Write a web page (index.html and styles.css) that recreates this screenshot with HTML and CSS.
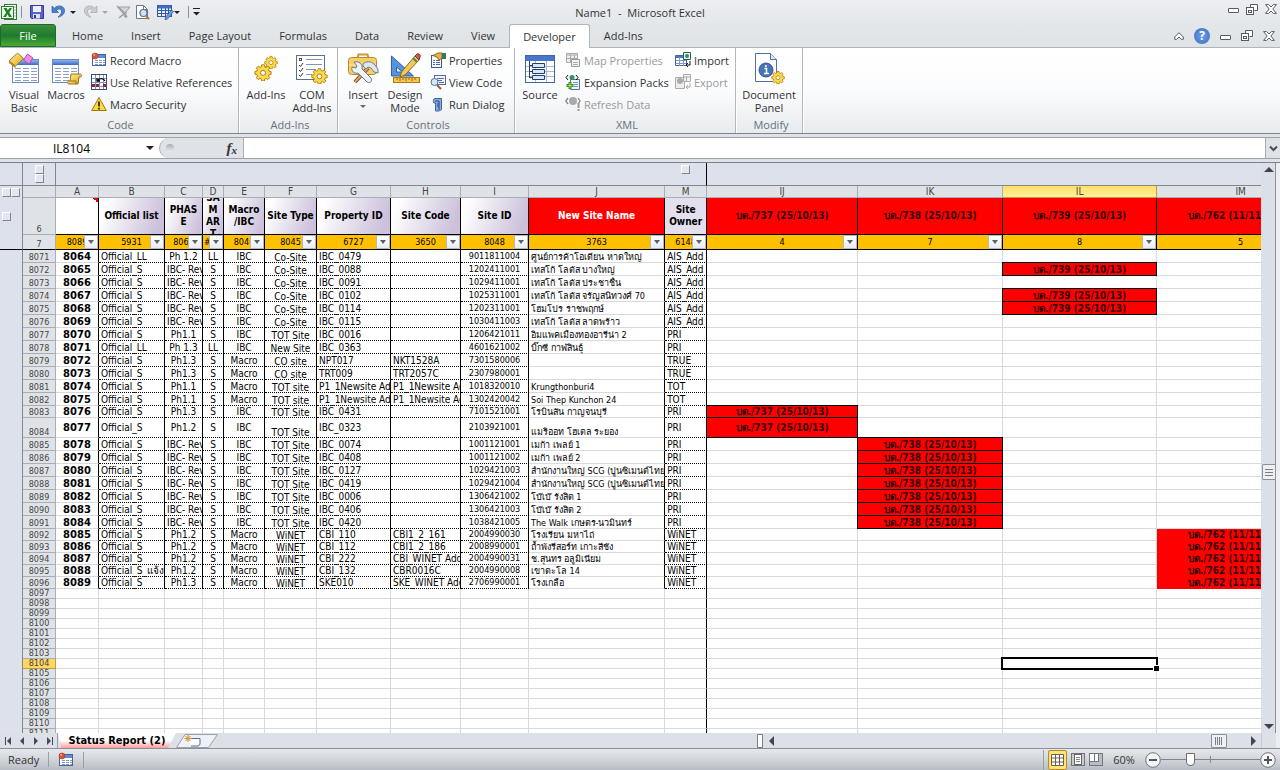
FILE: index.html
```html
<!DOCTYPE html>
<html lang="en">
<head>
    <meta charset="UTF-8">
    <meta name="viewport" content="width=device-width, initial-scale=1.0">
    <title>Name1 - Microsoft Excel</title>
    <link rel="stylesheet" href="styles.css">
</head>
<body>
    <svg class="defs" width="0" height="0" aria-hidden="true">
        <defs>
            <linearGradient id="gold" x1="0" y1="0" x2="1" y2="1">
                <stop offset="0" stop-color="#fff0a0"/><stop offset="1" stop-color="#e3a818"/>
            </linearGradient>
            <linearGradient id="blue" x1="0" y1="0" x2="0" y2="1">
                <stop offset="0" stop-color="#8fb4ee"/><stop offset="1" stop-color="#3a6bc4"/>
            </linearGradient>
            <symbol id="gear" viewBox="-1 -1 20 20">
                <path d="M7.500 1h3l.5 2.300 1.400.6 2-1.300 2 2-1.300 2 .6 1.400 2.300.5v3l-2.300.5-.6 1.400 1.300 2-2 2-2-1.300-1.400.6-.5 2.300h-3l-.5-2.300-1.400-.6-2 1.300-2-2 1.300-2-.6-1.400L0 11.500v-3L2.300 8l.6-1.400-1.300-2 2-2 2 1.300L7 3.300z" fill="#fbd84c" stroke="#a87400"/>
                <circle cx="9" cy="10" r="2.800" fill="#fff" stroke="#a87400"/>
            </symbol>
            <symbol id="sheet" viewBox="0 0 28 25">
                <rect x=".5" y=".5" width="26" height="23" fill="#fff" stroke="#6d8ab8"/>
                <rect x="1" y="1" width="25" height="5" fill="url(#blue)"/>
                <path d="M3 9.500h6m2 0h6m2 0h6M3 12.500h6m2 0h6m2 0h6M3 15.500h6m2 0h6m2 0h6M3 18.500h6m2 0h6m2 0h6M3 21.500h6m2 0h6m2 0h6" stroke="#8a9fc4"/>
            </symbol>
            <symbol id="record" viewBox="0 0 16 16">
                <rect x="1.500" y="2.500" width="13" height="11" fill="#fff" stroke="#45649c"/>
                <rect x="2" y="3" width="12" height="3" fill="#5d8bd8"/>
                <path d="M4 8.500h3m1 0h3m1 0h2M4 10.500h3m1 0h3m1 0h2M4 12.500h3m1 0h3m1 0h2" stroke="#7f98c4"/>
                <circle cx="4" cy="4" r="3" fill="#d6513c" stroke="#a93827" stroke-width=".6"/>
                <circle cx="3.200" cy="3" r="1" fill="#f3a597"/>
            </symbol>
            <symbol id="restore" viewBox="0 0 12 11">
                <path d="M4.500 3.500v-3h7v6h-3" fill="#fff" stroke="#555b66"/>
                <rect x=".5" y="3.500" width="7" height="7" fill="#fff" stroke="#555b66"/>
                <rect x="2.500" y="6.500" width="3" height="2" fill="none" stroke="#555b66"/>
            </symbol>
            <symbol id="close" viewBox="0 0 12 10">
                <path d="M.6.6h3L6 3 8.400.6h3L7.800 5l3.600 4.400h-3L6 7 3.600 9.400h-3L4.200 5z" fill="#fff" stroke="#555b66"/>
            </symbol>
        </defs>
    </svg>

    <header class="titlebar">
        <div class="quick">
            <button class="tool" aria-label="Excel"><svg width="18" height="18" viewBox="0 0 18 18"><rect x="4.500" y="1.500" width="12" height="15" fill="#fff" stroke="#2f7d32"/><path d="M13 4h3M13 7h3M13 10h3M13 13h3" stroke="#7fbd80"/><rect x="1.500" y="3.500" width="12" height="12" fill="#e8f5e5" stroke="#2f7d32"/><path d="M3.500 5h3l1.300 2.500L9.500 5H12L9.200 9.400 12 14H9l-1.500-3L5.800 14H3.200l3-4.600z" fill="#1f7a2b"/></svg></button>
            <span class="sep"></span>
            <button class="tool save" aria-label="Save"><svg width="16" height="16" viewBox="0 0 16 16"><path d="M1.500 1.500h13v13h-12l-1-1z" fill="#5a62c8" stroke="#333b94"/><rect x="4" y="2" width="8" height="6" fill="#eef0fb"/><rect x="4" y="10" width="7" height="4.500" fill="#dfe3f4"/><rect x="5" y="11" width="2" height="3" fill="#333b94"/></svg></button>
            <button class="tool undo" aria-label="Undo"><svg width="15" height="16" viewBox="0 0 15 16"><path d="M1 2v6.500h6.500L5.300 6.400C7 4.500 10 4.600 10.500 7c.4 2-1 4-3.500 6.200 4.500-1 7-4 6.500-7.200C13 1.500 6.500.5 3.300 4.300z" fill="#4b7fd0" stroke="#2f5ca8" stroke-width=".7"/></svg></button>
            <i class="caret"></i>
            <button class="tool redo" aria-label="Redo" disabled><svg width="15" height="16" viewBox="0 0 15 16"><path d="M14 2v6.500H7.500l2.200-2.100C8 4.500 5 4.600 4.500 7c-.4 2 1 4 3.500 6.200-4.500-1-7-4-6.500-7.200C2 1.500 8.500.5 11.700 4.300z" fill="#c9ccd0" stroke="#a2a6ab" stroke-width=".7"/></svg></button>
            <i class="caret pale"></i>
            <button class="tool funnel" aria-label="Clear filter" disabled><svg width="15" height="16" viewBox="0 0 15 16"><path d="M3 3h11L10 8v6l-2-2V8z" fill="#d2d4d7" stroke="#9b9fa4"/><path d="M1 2l10 11M10 8l-7 6" stroke="#9b9fa4" stroke-width="1.500"/></svg></button>
            <button class="tool preview" aria-label="Print preview"><svg width="16" height="16" viewBox="0 0 16 16"><path d="M1.500 1.500h7l4 4v9h-11z" fill="#fff" stroke="#6c7686"/><path d="M8.500 1.500v4h4" fill="none" stroke="#6c7686"/><path d="M11 12l3 3" stroke="#b9772c" stroke-width="2"/><circle cx="8.500" cy="9" r="3.500" fill="#cfe3f5" stroke="#5c6f8a" stroke-width="1.200"/></svg></button>
            <button class="tool" aria-label="Design table"><svg width="18" height="16" viewBox="0 0 18 16"><rect x="1.500" y="1.500" width="14" height="11" fill="#e7eefb" stroke="#35599c"/><path d="M2 3h13" stroke="#3e6fc6" stroke-width="3"/><path d="M2 6.500h13M2 9.500h13M5.500 4v8M9.500 4v8M12.500 4v8" stroke="#35599c"/><path d="M15.500 6l2 1.500-6 7.500-2.500.8.500-2.600z" fill="#6aa0e6" stroke="#2c4f8e" stroke-width=".7"/></svg></button>
            <i class="caret"></i>
            <span class="sep customize-sep"></span>
            <button class="tool" aria-label="Customize"><svg width="9" height="10" viewBox="0 0 9 10"><path d="M1 1.500h7" stroke="#222"/><path d="M1 5h7L4.500 8.500z" fill="#222"/></svg></button>
        </div>
        <h1 class="title">Name1 &nbsp;-&nbsp; Microsoft Excel</h1>
        <div class="window-buttons">
            <button aria-label="Minimize"><i class="dash"></i></button>
            <button aria-label="Restore"><svg width="12" height="11"><use href="#restore"/></svg></button>
            <button aria-label="Close"><svg width="12" height="10"><use href="#close"/></svg></button>
        </div>
    </header>

    <nav class="tabs">
        <button class="file">File</button>
        <button>Home</button>
        <button>Insert</button>
        <button>Page Layout</button>
        <button>Formulas</button>
        <button>Data</button>
        <button>Review</button>
        <button>View</button>
        <button class="active">Developer</button>
        <button>Add-Ins</button>
        <div class="window-buttons book-buttons">
            <button aria-label="Collapse ribbon"><svg width="10" height="8" viewBox="0 0 10 8"><path d="M5 .7L9.300 5v2.300h-2L5 5 2.700 7.300h-2V5z" fill="#fff" stroke="#555b66"/></svg></button>
            <button class="help" aria-label="Help">?</button>
            <button aria-label="Minimize workbook"><i class="dash"></i></button>
            <button aria-label="Restore workbook"><svg width="12" height="11"><use href="#restore"/></svg></button>
            <button aria-label="Close workbook"><svg width="12" height="10"><use href="#close"/></svg></button>
        </div>
    </nav>

    <section class="ribbon">
        <div class="group code">
            <div class="tools">
                <button class="big"><svg width="32" height="32" viewBox="0 0 32 32"><use href="#sheet" x="4" y="6" width="28" height="25"/><path d="M9.500 0l6 5.500-8 7.500L1 8z" fill="url(#gold)" stroke="#a9781a"/><path d="M1 8l6.500 5v2L1 10z" fill="#b98618"/><path d="M19.500 1l5.500 4-4 6-5.500-4z" fill="#ec8bea" stroke="#b04cb0"/></svg>Visual<br>Basic</button>
                <button class="big"><svg width="32" height="32" viewBox="0 0 32 32"><use href="#sheet" x="2" y="6" width="28" height="25"/><path d="M21 21h9c2 0 2 3 0 3h-1l-1 7h-9c-2 0-2-3 0-3h1z" fill="url(#gold)" stroke="#9a7220"/><path d="M20 28h6v3" fill="none" stroke="#9a7220"/></svg>Macros</button>
                <div class="stack">
                    <button class="small"><svg width="16" height="16"><use href="#record"/></svg>Record Macro</button>
                    <button class="small"><svg width="16" height="16" viewBox="0 0 16 16"><rect x=".5" y=".5" width="15" height="15" fill="#fff" stroke="#3c4d6e"/><path d="M1 4.500h14M1 8.500h14M1 12.500h14M4.500 1v14M8.500 1v14M12.500 1v14" stroke="#7f93bb"/><path d="M1 10h3v3H1zM5 10h3v3H5zM12 10h3v3h-3z" fill="#8b2252"/><path d="M14 7c-2-3-5-3-7-1M6 4v3h3" fill="none" stroke="#000" stroke-width="1.300"/></svg>Use Relative References</button>
                    <button class="small"><svg width="16" height="16" viewBox="0 0 16 16"><path d="M8 1.500L15.300 14.500H.7z" fill="#ffd83b" stroke="#9b7a16" stroke-linejoin="round"/><path d="M8 5.500v5M8 11.800v1.600" stroke="#222" stroke-width="1.700"/></svg>Macro Security</button>
                </div>
            </div>
            <div class="label">Code</div>
        </div>
        <div class="group addins">
            <div class="tools">
                <button class="big"><svg width="32" height="32" viewBox="0 0 32 32"><use href="#gear" x="14" y="2" width="14" height="14"/><use href="#gear" x="4" y="10" width="18" height="18"/></svg>Add-Ins</button>
                <button class="big"><svg width="32" height="32" viewBox="0 0 32 32"><rect x=".5" y="2.500" width="28" height="24" fill="#fff" stroke="#5b6f92"/><rect x="3.500" y="5.500" width="2" height="2" fill="none" stroke="#555"/><path d="M3 12l1.500 1.500L7 10M3 17l1.500 1.500L7 15M3 22l1.500 1.500L7 20" fill="none" stroke="#333"/><path d="M10 6.500h16M10 11.500h16M10 16.500h10M10 21.500h6" stroke="#7c93bd"/><use href="#gear" x="15" y="14" width="17" height="17"/></svg>COM<br>Add-Ins</button>
            </div>
            <div class="label">Add-Ins</div>
        </div>
        <div class="group controls">
            <div class="tools">
                <button class="big"><svg width="32" height="32" viewBox="0 0 32 32"><path d="M10.500 5l1-3.500h9l1 3.500" fill="none" stroke="#c89a3a" stroke-width="2"/><rect x="1.500" y="4.500" width="28" height="17" rx="3" fill="#f6cf67" stroke="#b8892a"/><path d="M2 12h27" stroke="#fbe6a6"/><path d="M8 29L21 15" stroke="#7a4a1d" stroke-width="4"/><path d="M8 29L21 15" stroke="#e0a458" stroke-width="2"/><path d="M16 11c3-3 8-3 11 0l4 5v4l-4-1-3-4-3-1-2 2-3-3z" fill="#dfe6ef" stroke="#6c7e98"/><path d="M7 9l3 4-1 2-4-1c-1 4 2 7 6 6l9 9c3 2 6-1 4-4l-9-9c1-5-3-8-8-7z" fill="#eef3f9" stroke="#66799a"/></svg>Insert<i class="caret grey"></i></button>
                <button class="big"><svg width="32" height="32" viewBox="0 0 32 32"><path d="M2.500 3v20h22z" fill="#5b92e0" stroke="#2f5fa8"/><path d="M7.500 14v5h6z" fill="#e8f0fc" stroke="#2f5fa8"/><path d="M26 3l4 4-14 15-5 2 1.500-5z" fill="#f5c955" stroke="#8b6a1a"/><path d="M26 3l2-2c2-1 4 1 3 3l-1 3z" fill="#c75b58" stroke="#7f3330"/><path d="M24 5l4 4" stroke="#4f8a4f" stroke-width="2"/><rect x="4.500" y="24.500" width="26" height="5" fill="#f7c64a" stroke="#a97b14"/><path d="M8 25v2M11 25v3M14 25v2M17 25v3M20 25v2M23 25v3M26 25v2" stroke="#8b6a1a"/></svg>Design<br>Mode</button>
                <div class="stack">
                    <button class="small"><svg width="16" height="16" viewBox="0 0 16 16"><rect x="1.500" y="3.500" width="10" height="12" fill="#f5f8fd" stroke="#405a8a"/><path d="M3 8.500h2m1 0h4M3 10.500h2m1 0h4M3 12.500h2m1 0h4" stroke="#4a6db0"/><path d="M3 3.500L8 1h4v5L9 8 7 5z" fill="#e8b04b" stroke="#93651a"/><path d="M12 1h4v6h-4z" fill="#35785f"/></svg>Properties</button>
                    <button class="small"><svg width="16" height="16" viewBox="0 0 16 16"><rect x="4.500" y="1.500" width="11" height="9" fill="#f2f6fc" stroke="#536c9c"/><path d="M7 4.500h7M7 6.500h5M9 8.500h5" stroke="#536c9c"/><circle cx="4.500" cy="8" r="3.500" fill="#d4e6f8" stroke="#56709c"/><path d="M7 11l4 4" stroke="#9b5a37" stroke-width="2"/></svg>View Code</button>
                    <button class="small"><svg width="16" height="16" viewBox="0 0 16 16"><path d="M5 2.500h6.500v11c0 1-3.500 2-6 1.500V7H4c-1-2-1-4 1-4.500z" fill="#8aabdc" stroke="#40639e"/><path d="M5 5h4v9M7 8h2M7 10h2" fill="none" stroke="#234a86"/></svg>Run Dialog</button>
                </div>
            </div>
            <div class="label">Controls</div>
        </div>
        <div class="group xml">
            <div class="tools">
                <button class="big"><svg width="32" height="32" viewBox="0 0 32 32"><rect x="1.500" y="2.500" width="29" height="27" fill="#fff" stroke="#45649c"/><path d="M2 3h28v5H2z" fill="#4677cc"/><path d="M2 13.500h28M2 18.500h28M2 23.500h28M22.500 8v21M11.500 8v21" stroke="#a5b8dd"/><path d="M5.500 8v17M5 12.500h4M5 18.500h4M5 24.500h4" stroke="#223d70" fill="none"/><path d="M8.500 10.500h12v4h-12zM8.500 16.500h12v4h-12zM8.500 22.500h12v4h-12z" fill="#dce7f9" stroke="#223d70"/></svg>Source</button>
                <div class="stack schema">
                    <button class="small" disabled><svg width="16" height="16" viewBox="0 0 16 16"><path d="M1.500 1.500h11v9h-11z" fill="#eee" stroke="#aaa"/><path d="M1 3h12M1 6.500h11M5.500 3v8M9.500 3v8" stroke="#aaa"/><path d="M6.500 7.500h8v7h-8z" fill="#f4f4f4" stroke="#999"/><path d="M8 10.500h5M8 12.500h5" stroke="#aaa"/></svg>Map Properties</button>
                    <button class="small"><svg width="16" height="16" viewBox="0 0 16 16"><path d="M5.500 5.500h9v10h-9z" fill="#eef4fb" stroke="#56709c"/><path d="M8 8.500h5M9 10.500h4M9 12.500h4" stroke="#7c93bd"/><path d="M3 1L1 3.500 3 6M11 1l2 2.500L11 6" fill="none" stroke="#111"/><circle cx="7" cy="3.500" r="2.500" fill="#39906b"/><path d="M5 8v7M1.500 11.500h7" stroke="#3b8f1e" stroke-width="3"/><path d="M5 9v5M2.500 11.500h5" stroke="#a3e070"/></svg>Expansion Packs</button>
                    <button class="small" disabled><svg width="16" height="16" viewBox="0 0 16 16"><path d="M3 2L.8 5 3 8M13 2l2 3-2 3" fill="none" stroke="#888" stroke-width="1.300"/><circle cx="8" cy="5" r="4" fill="#aaa"/><path d="M13.500 7v5M13.500 13v2" stroke="#999" stroke-width="2"/></svg>Refresh Data</button>
                </div>
                <div class="stack">
                    <button class="small"><svg width="16" height="16" viewBox="0 0 16 16"><path d="M.5 3.500h11v10H.5z" fill="#fff" stroke="#45649c"/><path d="M1 5h10" stroke="#4677cc" stroke-width="2"/><path d="M1 8.500h10M1 11.500h10M4.500 5v9M8.500 5v9" stroke="#7f98c4"/><path d="M8.500.5h7v7h-7z" fill="#e7f3ee" stroke="#2d5d50"/><circle cx="12" cy="4" r="2" fill="#2f8a66"/><path d="M15 9v4h-4m2-2l-2 2 2 2" fill="none" stroke="#111"/></svg>Import</button>
                    <button class="small" disabled><svg width="16" height="16" viewBox="0 0 16 16"><path d="M.5 3.500h9v11h-9z" fill="#eee" stroke="#aaa"/><circle cx="5" cy="7" r="3" fill="#aaa"/><path d="M8.500.5h7v7h-7z" fill="#f4f4f4" stroke="#aaa"/><path d="M8 3h8M11.500 3v5M15 9v4h-4m2-2l-2 2 2 2" fill="none" stroke="#aaa"/></svg>Export</button>
                </div>
            </div>
            <div class="label">XML</div>
        </div>
        <div class="group modify">
            <div class="tools">
                <button class="big"><svg width="32" height="32" viewBox="0 0 32 32"><path d="M2.500.5h15l6 6v22h-21z" fill="#fff" stroke="#56709c"/><path d="M17.500.5v6h6" fill="#dce6f4" stroke="#56709c"/><circle cx="13" cy="17" r="7" fill="#4a74ba" stroke="#2f568f"/><path d="M11.500 15.500h2v5M11 20.500h5M13 12v2" fill="none" stroke="#fff" stroke-width="1.500"/><use href="#gear" x="18" y="17" width="14" height="14"/></svg>Document<br>Panel</button>
            </div>
            <div class="label">Modify</div>
        </div>
    </section>

    <section class="formula-bar">
        <input class="name-box" type="text" value="IL8104" aria-label="Name Box">
        <button class="name-arrow" aria-label="Names"><i class="caret"></i></button>
        <div class="fx-area"><i class="knob"></i><button class="fx" aria-label="Insert Function">f<sub>x</sub></button></div>
        <input class="formula" type="text" aria-label="Formula">
        <button class="expand" aria-label="Expand Formula Bar"><svg width="9" height="7" viewBox="0 0 9 7"><path d="M1 1.500l3.500 3.500L8 1.500" fill="none" stroke="#4a4f59" stroke-width="2"/></svg></button>
    </section>

    <main class="workbook">
        <div class="pane">
            <table class="grid">
                <colgroup id="columns"></colgroup>
                <thead id="head"></thead>
                <tbody id="rows"></tbody>
            </table>
        </div>
        <div class="vscroll">
            <button aria-label="Scroll up"><i class="arrow up"></i></button>
            <span class="before"></span>
            <i class="thumb"></i>
            <span class="after"></span>
            <button aria-label="Scroll down"><i class="arrow down"></i></button>
        </div>
    </main>

    <section class="sheet-bar">
        <div class="sheets">
            <div class="sheet-nav">
                <button aria-label="First sheet"><svg width="8" height="8" viewBox="0 0 8 8"><path d="M1.500 0v8" stroke="#444b57"/><path d="M7 0v8L3 4z" fill="#444b57"/></svg></button>
                <button aria-label="Previous sheet"><svg width="8" height="8" viewBox="0 0 8 8"><path d="M6 0v8L2 4z" fill="#444b57"/></svg></button>
                <button aria-label="Next sheet"><svg width="8" height="8" viewBox="0 0 8 8"><path d="M2 0v8l4-4z" fill="#444b57"/></svg></button>
                <button aria-label="Last sheet"><svg width="8" height="8" viewBox="0 0 8 8"><path d="M1 0v8l4-4z" fill="#444b57"/><path d="M6.500 0v8" stroke="#444b57"/></svg></button>
            </div>
            <button class="sheet-tab">Status Report (2)</button>
            <button class="new-tab" aria-label="Insert sheet"><svg width="42" height="14" viewBox="0 0 42 14"><path d="M.5 13.500L9 .5h32.500l-9 13z" fill="#eef1f5" stroke="#9aa0aa"/><path d="M14 4.500h10v6l-2 1.500h-7" fill="#fff" stroke="#4f6fa8"/><path d="M12 1v7M8.500 4.500h7M9.500 2l5 5M14.500 2l-5 5" stroke="#d3902c"/></svg></button>
        </div>
        <div class="hscroll">
            <i class="splitter"></i>
            <button aria-label="Scroll left"><i class="arrow left"></i></button>
            <span class="before"></span>
            <i class="thumb"></i>
            <span class="after"></span>
            <button aria-label="Scroll right"><i class="arrow right"></i></button>
        </div>
        <i class="corner"></i>
    </section>

    <footer class="status">
        <span class="ready">Ready</span>
        <button class="macro-rec" aria-label="Record macro"><svg width="16" height="16"><use href="#record"/></svg></button>
        <div class="views">
            <button class="on" aria-label="Normal"><svg width="13" height="12" viewBox="0 0 13 12"><path d="M.5.5h12v11H.5zM.5 4h12M.5 8h12M4.500.5v11M8.500.5v11" fill="#fff" stroke="#6a6250"/></svg></button>
            <button aria-label="Page Layout"><svg width="14" height="13" viewBox="0 0 14 13"><rect width="14" height="13" fill="#6f747d"/><rect x="1" y="1" width="12" height="11" fill="#c9ccd1"/><rect x="3.500" y="1.500" width="7" height="10" fill="#fff" stroke="#666"/><path d="M5 4.500h4M5 6.500h4M5 8.500h4" stroke="#888"/></svg></button>
            <button aria-label="Page Break Preview"><svg width="14" height="13" viewBox="0 0 14 13"><rect width="14" height="13" fill="#6f747d"/><path d="M1 1h4v7H1zM6 1h3v7H6z" fill="#fff"/><path d="M10 1h3v11H1V9h9z" fill="#b9bdc4"/></svg></button>
        </div>
        <span class="percent">60%</span>
        <button class="round" aria-label="Zoom out"><svg width="16" height="16" viewBox="0 0 16 16"><circle cx="8" cy="8" r="7.300" fill="#f6f7f8" stroke="#70757e"/><path d="M4 8h8" stroke="#555" stroke-width="2"/></svg></button>
        <input class="zoom" type="range" min="10" max="200" value="62" aria-label="Zoom">
        <button class="round" aria-label="Zoom in"><svg width="16" height="16" viewBox="0 0 16 16"><circle cx="8" cy="8" r="7.300" fill="#f6f7f8" stroke="#70757e"/><path d="M4 8h8M8 4v8" stroke="#555" stroke-width="2"/></svg></button>
    </footer>

    <script src="script.js"></script>
</body>
</html>
```
FILE: styles.css
```css
* {
    box-sizing: border-box;
}
body {
    margin: 0;
    height: 100vh;
    display: flex;
    flex-direction: column;
    overflow: hidden;
    background-color: #dfe2e7;
    font-family: "Open Sans", "Noto Sans", sans-serif;
    font-size: 11px;
    color: #333;
}
button {
    padding: 0;
    border: none;
    background: none;
    font: inherit;
    color: inherit;
}
svg {
    display: block;
    flex: none;
}
.defs {
    position: absolute;
}

/* Title bar */
.titlebar {
    display: grid;
    grid-template-columns: 1fr auto 1fr;
    align-items: center;
    height: 24px;
    background: linear-gradient(#eceef1, #e4e7ea);
}
.quick {
    display: flex;
    align-items: center;
}
.sep {
    width: 1px;
    height: 12px;
    margin: 0 7px 0 3px;
    background-color: #8b9098;
}
.save {
    margin-right: 6px;
}
.undo, .redo {
    margin-right: 4px;
}
.quick .redo {
    margin-left: 7px;
}
.funnel {
    margin: 0 4px 0 8px;
}
.preview {
    margin-right: 5px;
}
.customize-sep {
    margin: 0 3px 0 8px;
}
.caret {
    border: 3px solid transparent;
    border-top-color: #222;
    border-bottom: none;
}
.caret.pale {
    border-top-color: #a5a8ad;
}
.caret.grey {
    border-top-color: #666;
}
.title {
    margin: 0;
    font-size: 11px;
    font-weight: normal;
}
.window-buttons {
    display: flex;
    justify-content: flex-end;
    align-items: center;
    gap: 7px;
    padding: 0 3px 6px 0;
}
.dash {
    display: block;
    width: 11px;
    height: 5px;
    margin-top: 3px;
    border: 1px solid #555b66;
    border-radius: 1px;
    background-color: #fff;
}

/* Ribbon tabs */
.tabs {
    display: flex;
    height: 24px;
    border-bottom: 1px solid #b0b5bb;
    background: linear-gradient(#e4e7ea, #dfe3e6);
}
.tabs > button {
    padding: 0 14px;
    line-height: 23px;
}
.tabs .file {
    width: 56px;
    margin-right: 2px;
    border: 1px solid #1f6a2a;
    border-radius: 3px 3px 0 0;
    background: linear-gradient(#3b8f3c, #1f7b2c 50%, #49ab35);
    color: #fff;
    line-height: 21px;
}
.tabs .active {
    height: 24px;
    border: 1px solid #b0b5bb;
    border-bottom: none;
    border-radius: 3px 3px 0 0;
    padding: 0 13px;
    background-color: #fff;
}
.book-buttons {
    flex: 1;
    gap: 10px;
    padding: 0 5px 0 0;
}
.help {
    width: 16px;
    height: 16px;
    border-radius: 50%;
    background: radial-gradient(#6ba0ea, #3a6dc0);
    color: #fff;
    font-size: 12px;
    font-weight: bold;
    line-height: 16px;
}

/* Ribbon */
.ribbon {
    display: flex;
    height: 86px;
    border-bottom: 1px solid #80868f;
    background: linear-gradient(#fff, #fbfcfd 50%, #e8ebee);
}
.group {
    display: flex;
    flex-direction: column;
    justify-content: space-between;
    padding: 1px 0 1px 3px;
    border-right: 1px solid #b4b8be;
    box-shadow: 1px 0 #fff;
    margin-right: 1px;
}
.code {
    width: 239px;
}
.addins {
    width: 98px;
}
.controls {
    width: 176px;
}
.xml {
    width: 220px;
}
.modify {
    width: 66px;
}
.tools {
    display: flex;
}
.big {
    display: flex;
    flex-direction: column;
    align-items: center;
    flex: none;
    width: 42px;
    padding-top: 4px;
    line-height: 13px;
}
.big svg {
    margin-bottom: 3px;
}
.big .caret {
    margin-top: 4px;
}
.addins .big {
    width: 46px;
}
.modify .big {
    width: 58px;
}
.stack {
    margin-left: 4px;
}
.schema {
    width: 106px;
}
.small {
    display: flex;
    align-items: center;
    gap: 3px;
    height: 22px;
    white-space: nowrap;
}
.small:disabled {
    color: #9a9a9a;
}
.label {
    line-height: 14px;
    text-align: center;
    color: #6a7079;
}

/* Formula bar */
.formula-bar {
    display: flex;
    height: 22px;
    margin: 3px 0;
    border-top: 1px solid #9a9fa8;
    border-bottom: 1px solid #9a9fa8;
    background-color: #fff;
}
.formula-bar input {
    border: none;
    padding: 0;
    outline: none;
    background-color: #fff;
    font: inherit;
    font-size: 12px;
    color: #000;
}
.name-box {
    width: 143px;
    text-align: center;
}
.name-arrow {
    width: 16px;
}
.name-arrow .caret {
    display: block;
    width: 8px;
    margin: 0 auto 0 3px;
    border-width: 4px;
    border-bottom: none;
}
.fx-area {
    display: flex;
    align-items: center;
    justify-content: space-between;
    width: 85px;
    padding: 0 6px;
    border: 1px solid #a9adb5;
    border-width: 0 1px;
    border-radius: 10px 0 0 10px;
    background-color: #dfe3e8;
}
.knob {
    width: 8px;
    height: 8px;
    border-radius: 50%;
    background: linear-gradient(#a9adb3, #eceef0);
}
.fx {
    font: italic bold 15px "Liberation Serif", serif;
}
.fx sub {
    font-size: 11px;
    vertical-align: -1px;
}
.formula {
    flex: 1;
    min-width: 0;
}
.expand {
    display: flex;
    align-items: center;
    justify-content: center;
    width: 15px;
    border-left: 1px solid #a9adb5;
    background-color: #dfe3e8;
}

/* Sheet */
.workbook {
    display: flex;
    flex: 1;
    min-height: 0;
    border-top: 1px solid #7c828c;
}
.pane {
    flex: 1;
    min-width: 0;
    overflow: hidden;
    background-color: #fff;
}
.grid {
    table-layout: fixed;
    width: 0;
    border-collapse: separate;
    border-spacing: 0;
    font-family: "DejaVu Sans Condensed", "DejaVu Sans", sans-serif;
    font-size: 9px;
    line-height: 9px;
    color: #000;
}
.grid td, .grid th {
    height: 10px;
    padding: 0 1px;
    overflow: hidden;
    border: 0 solid #d8dadd;
    border-width: 0 1px 1px 0;
    font-weight: normal;
    text-align: center;
    white-space: nowrap;
}
.grid .gutter {
    border-right-color: #80858e;
    border-bottom: none;
    background-color: #dde1ec;
}
.grid .row-head {
    border-color: #a9adb4;
    background-color: #dfe3e8;
    color: #444;
    vertical-align: bottom;
}
.grid .current {
    border-color: #c39a3c;
    background-color: #ffd75e;
}
.grid .outline th {
    height: 23px;
    padding-top: 2px;
    border-right: none;
    border-bottom-color: #80858e;
    background-color: #dde1ec;
    vertical-align: top;
}
.grid .outline .ruled {
    border-right: 1px solid #80858e;
}
.grid .outline .frozen {
    border-right: 1px solid #000;
}
.level {
    display: block;
    width: 9px;
    height: 9px;
    margin: 0 auto;
    border: 1px solid #fff;
    border-right-color: #80858e;
    border-bottom-color: #80858e;
    background-color: #e4e7ee;
}
.side-by-side {
    display: flex;
    justify-content: center;
}
.side-by-side .level {
    margin: 0;
}
.grid .letters th {
    height: 12px;
    border-color: #a9adb4;
    background-color: #dfe3e8;
    font-size: 10px;
    color: #444;
}
.grid .letters .gutter {
    border-right-color: #80858e;
    background-color: #dde1ec;
}
.grid .letters .current {
    border-color: #c39a3c;
    background: linear-gradient(#ffe067, #fff09a);
}
.names .level {
    margin-left: 1px;
}
.grid .names .caption {
    height: 37px;
    border-color: #000;
    background: linear-gradient(110deg, #fff 10%, #ccc0da 90%);
    font-size: 10px;
    font-weight: bold;
    line-height: 12px;
}
.caption div {
    display: flex;
    align-items: center;
    justify-content: center;
    height: 36px;
}
.grid .names .note {
    position: relative;
    background: #fff;
}
.note::after {
    content: "";
    position: absolute;
    top: 0;
    right: 0;
    width: 5px;
    height: 5px;
    background: linear-gradient(to top right, transparent 50%, #e00000 50%);
}
.grid .names .site-name {
    background: #f00;
    color: #fff;
}
.grid .names .owner {
    background: #e4dfec;
}
.grid .names .order {
    background: #f00;
    color: #300;
}
.grid .filters th, .grid .filters td {
    position: relative;
    height: 15px;
    border-bottom-color: #000;
}
.grid .filters td {
    border-color: #000;
    background-color: #ffc000;
}
.grid .filters .gutter {
    border-bottom: 1px solid #000;
}
.filter {
    position: absolute;
    right: 0;
    bottom: 0;
    display: flex;
    align-items: center;
    justify-content: center;
    width: 14px;
    height: 14px;
    border: 1px solid #b4b8bf;
    background: linear-gradient(#fff, #e9ecf0);
}
.filter .caret {
    border-width: 4px 3px 0;
    border-top-color: #5a606b;
}
.grid .tall td, .grid .tall th {
    height: 13px;
}
.grid .medium td, .grid .medium th {
    height: 12px;
}
.grid .high td, .grid .high th {
    height: 20px;
}
.grid .id {
    font-family: "DejaVu Sans", sans-serif;
    font-size: 10px;
    font-weight: bold;
    border-right-color: #000;
}
/* underscores hang over the dotted line */
.grid .field {
    overflow-x: clip;
    overflow-y: visible;
    border-right-color: #000;
    border-bottom: 1px dotted #000;
    font-size: 10px;
}
.grid .text {
    padding-left: 2px;
    padding-right: 0;
    text-align: left;
}
.grid .low {
    vertical-align: bottom;
}
.grid .number {
    font-size: 9px;
}
.grid .thai {
    border-bottom: 1px solid #d8dadd;
    font-size: 9px;
}
.grid .frozen {
    border-right-color: #000;
}
.grid .order-cell {
    background-color: #f00;
    border-color: #000;
    box-shadow: 0 -1px #000, -1px 0 #000, -1px -1px #000;
    color: #300;
    font-size: 10px;
    font-weight: bold;
}
.grid .borderless {
    border-color: #f00;
    box-shadow: none;
}
.grid .selected {
    position: relative;
    overflow: visible;
}
.cursor {
    position: absolute;
    inset: -2px;
    border: 2px solid #000;
}
.cursor::after {
    content: "";
    position: absolute;
    right: -3px;
    bottom: -3px;
    width: 5px;
    height: 5px;
    border: 1px solid #fff;
    border-width: 1px 0 0 1px;
    background-color: #000;
}

/* Scroll bars */
.vscroll {
    display: flex;
    flex-direction: column;
    align-items: center;
    width: 19px;
    padding: 4px 0;
    border-right: 4px solid #eceef1;
    background-color: #dbdfe7;
    box-shadow: inset -1px 0 #8a8f98;
}
.vscroll .before {
    flex: 6;
}
.vscroll .after {
    flex: 5;
}
.thumb {
    width: 14px;
    height: 16px;
    border: 1px solid #8a8f98;
    border-radius: 1px;
    background: repeating-linear-gradient(#777d88 0 1px, transparent 1px 3px) center / 8px 7px no-repeat, #eef0f3;
}
.arrow {
    display: block;
    border: 5px solid transparent;
}
.up {
    border-top: none;
    border-bottom-color: #3f4550;
}
.down {
    border-bottom: none;
    border-top-color: #3f4550;
}
.left {
    border-left: none;
    border-right-color: #3f4550;
}
.right {
    border-right: none;
    border-left-color: #3f4550;
}
.sheet-bar {
    display: flex;
    height: 16px;
    border-bottom: 1px solid #8a8f98;
    background-color: #dde1e7;
}
.sheets {
    display: flex;
    flex: 3;
}
.sheet-nav {
    display: flex;
    align-items: center;
    gap: 6px;
    width: 58px;
    padding-left: 4px;
    border-right: 1px solid #9aa0aa;
}
.sheet-tab {
    width: 118px;
    background: linear-gradient(#fff 50%, #ff9c9c);
    clip-path: polygon(0 0, 100% 0, 110px 100%, 3px 100%);
    font: bold 11px "DejaVu Sans Condensed", "DejaVu Sans", sans-serif;
    line-height: 15px;
    color: #000;
}
.hscroll {
    display: flex;
    align-items: center;
    flex: 2;
}
.splitter {
    width: 6px;
    height: 14px;
    margin-right: 6px;
    border: 1px solid #7c828c;
    background-color: #fff;
}
.hscroll .before {
    flex: 18;
}
.hscroll .after {
    flex: 1;
}
.hscroll .thumb {
    height: 14px;
    width: 16px;
    background: repeating-linear-gradient(to right, #777d88 0 1px, transparent 1px 2px) center / 7px 8px no-repeat, #eef0f3;
}
.hscroll button:last-child {
    margin-right: 5px;
}
.corner {
    width: 19px;
    border-left: 1px solid #c6cad1;
    border-right: 4px solid #eceef1;
}

/* Status bar */
.status {
    display: flex;
    align-items: center;
    height: 21px;
    padding-right: 4px;
    background: linear-gradient(#e6e9ec, #cdd1d6 60%, #b8bdc4);
}
.ready {
    width: 49px;
    padding-left: 8px;
    border-right: 1px solid #9ba0a8;
}
.macro-rec {
    width: 35px;
    padding-left: 9px;
    border-right: 1px solid #9ba0a8;
}
.views {
    display: flex;
    align-items: center;
    gap: 4px;
    margin-left: auto;
    padding-left: 4px;
    border-left: 1px solid #9ba0a8;
}
.views .on {
    padding: 3px 2px;
    border: 1px solid #b88a2c;
    border-radius: 2px;
    background-color: #ffe375;
}
.percent {
    width: 42px;
    text-align: center;
}
.zoom {
    width: 99px;
    height: 16px;
    margin: 0;
    appearance: none;
    background: linear-gradient(#7f858e, #7f858e) center / 100% 1px no-repeat, linear-gradient(#7f858e, #7f858e) center / 1px 7px no-repeat;
}
.zoom::-webkit-slider-thumb {
    appearance: none;
    width: 9px;
    height: 13px;
    border: 1px solid #6a6f78;
    border-radius: 1px 1px 5px 5px;
    background-color: #fff;
}
```
FILE: script.js
```js
const columns = [
    ['A', 43], ['B', 66], ['C', 38], ['D', 21], ['E', 41], ['F', 52], ['G', 74], ['H', 70],
    ['I', 68], ['J', 136], ['M', 42], ['IJ', 151], ['IK', 145], ['IL', 154], ['IM', 168]
];
const names = ['', 'Official list', 'PHAS<br>E', 'SA<br>M<br>AR<br>T', 'Macro<br>/IBC', 'Site Type', 'Property ID',
    'Site Code', 'Site ID', 'New Site Name', 'Site<br>Owner', 'บด./737 (25/10/13)', 'บด./738 (25/10/13)',
    'บด./739 (25/10/13)', 'บด./762 (11/11/2013)'];
const filters = ['8089', '5931', '8069', '####', '8046', '8045', '6727', '3650', '8048', '3763', '6148', '4', '7', '8', '5'];

// id, list, phase, mart, type, site type, property, code, site id, name, owner
const sites = [
    ['8064', 'Official_LL', 'Ph 1.2', 'LL', 'IBC', 'Co-Site', 'IBC_0479', '', '9011811004', 'ศูนย์การค้าโอเดียน หาดใหญ่', 'AIS_Add'],
    ['8065', 'Official_S', 'IBC- Rev', 'S', 'IBC', 'Co-Site', 'IBC_0088', '', '1202411001', 'เทสโก้ โลตัส บางใหญ่', 'AIS_Add'],
    ['8066', 'Official_S', 'IBC- Rev', 'S', 'IBC', 'Co-Site', 'IBC_0091', '', '1029411001', 'เทสโก้ โลตัส ประชาชื่น', 'AIS_Add'],
    ['8067', 'Official_S', 'IBC- Rev', 'S', 'IBC', 'Co-Site', 'IBC_0102', '', '1025311001', 'เทสโก้ โลตัส จรัญสนิทวงศ์ 70', 'AIS_Add'],
    ['8068', 'Official_S', 'IBC- Rev', 'S', 'IBC', 'Co-Site', 'IBC_0114', '', '1202311001', 'โฮมโปร ราชพฤกษ์', 'AIS_Add'],
    ['8069', 'Official_S', 'IBC- Rev', 'S', 'IBC', 'Co-Site', 'IBC_0115', '', '1030411003', 'เทสโก้ โลตัส ลาดพร้าว', 'AIS_Add'],
    ['8070', 'Official_S', 'Ph1.1', 'S', 'IBC', 'TOT Site', 'IBC_0016', '', '1206421011', 'อิมแพคเมืองทองอารีน่า 2', 'PRI'],
    ['8071', 'Official_LL', 'Ph 1.3', 'LL', 'IBC', 'New Site', 'IBC_0363', '', '4601621002', 'บิ๊กซี กาฬสินธุ์', 'PRI'],
    ['8072', 'Official_S', 'Ph1.3', 'S', 'Macro', 'CO site', 'NPT017', 'NKT1528A', '7301580006', '', 'TRUE'],
    ['8073', 'Official_S', 'Ph1.3', 'S', 'Macro', 'CO site', 'TRT009', 'TRT2057C', '2307980001', '', 'TRUE'],
    ['8074', 'Official_S', 'Ph1.1', 'S', 'Macro', 'TOT site', 'P1_1Newsite Add', 'P1_1Newsite Add', '1018320010', 'Krungthonburi4', 'TOT'],
    ['8075', 'Official_S', 'Ph1.1', 'S', 'Macro', 'TOT site', 'P1_1Newsite Add', 'P1_1Newsite Add', '1302420042', 'Soi Thep Kunchon 24', 'TOT'],
    ['8076', 'Official_S', 'Ph1.3', 'S', 'IBC', 'TOT Site', 'IBC_0431', '', '7101521001', 'โรบินสัน กาญจนบุรี', 'PRI'],
    ['8077', 'Official_S', 'Ph1.2', 'S', 'IBC', 'TOT Site', 'IBC_0323', '', '2103921001', 'แมริออท โฮเตล ระยอง', 'PRI'],
    ['8078', 'Official_S', 'IBC- Rev', 'S', 'IBC', 'TOT Site', 'IBC_0074', '', '1001121001', 'เมก้า เพลย์ 1', 'PRI'],
    ['8079', 'Official_S', 'IBC- Rev', 'S', 'IBC', 'TOT Site', 'IBC_0408', '', '1001121002', 'เมก้า เพลย์ 2', 'PRI'],
    ['8080', 'Official_S', 'IBC- Rev', 'S', 'IBC', 'TOT Site', 'IBC_0127', '', '1029421003', 'สำนักงานใหญ่ SCG (ปูนซิเมนต์ไทย)', 'PRI'],
    ['8081', 'Official_S', 'IBC- Rev', 'S', 'IBC', 'TOT Site', 'IBC_0419', '', '1029421004', 'สำนักงานใหญ่ SCG (ปูนซิเมนต์ไทย)', 'PRI'],
    ['8082', 'Official_S', 'IBC- Rev', 'S', 'IBC', 'TOT Site', 'IBC_0006', '', '1306421002', 'โบ๊เบ๊ รังสิต 1', 'PRI'],
    ['8083', 'Official_S', 'IBC- Rev', 'S', 'IBC', 'TOT Site', 'IBC_0406', '', '1306421003', 'โบ๊เบ๊ รังสิต 2', 'PRI'],
    ['8084', 'Official_S', 'IBC- Rev', 'S', 'IBC', 'TOT Site', 'IBC_0420', '', '1038421005', 'The Walk เกษตร-นวมินทร์', 'PRI'],
    ['8085', 'Official_S', 'Ph1.2', 'S', 'Macro', 'WiNET', 'CBI_110', 'CBI1_2_161', '2004990030', 'โรงเรียน มหาไถ่', 'WiNET'],
    ['8086', 'Official_S', 'Ph1.2', 'S', 'Macro', 'WiNET', 'CBI_112', 'CBI1_2_186', '2008990001', 'ถ้ำพังรีสอร์ท เกาะสีชัง', 'WiNET'],
    ['8087', 'Official_S', 'Ph1.2', 'S', 'Macro', 'WiNET', 'CBI_222', 'CBI_WINET Add', '2004990031', 'ช.สุนทร อลูมิเนียม', 'WiNET'],
    ['8088', 'Official_S_แจ้ง', 'Ph1.2', 'S', 'Macro', 'WiNET', 'CBI_132', 'CBR0016C', '2004990008', 'เขาตะโล 14', 'WiNET'],
    ['8089', 'Official_S', 'Ph1.3', 'S', 'Macro', 'WiNET', 'SKE010', 'SKE_WINET Add', '2706990001', 'โรงเกลือ', 'WiNET']
];

const firstRow = 8071;
const lastRow = 8111;
const currentRow = 8104;
const textColumns = ['B', 'G', 'H', 'J', 'M'];

// sheet rows that carry an order, per order column
const orders = {
    IJ: [8083, 8084],
    IK: [8085, 8086, 8087, 8088, 8089, 8090, 8091],
    IL: [8072, 8074, 8075],
    IM: [8092, 8093, 8094, 8095, 8096]
};

function rowSize(row) {
    if (row === 8084) return 'high';
    if (row === 8083 || (row >= 8092 && row <= 8096)) return 'medium';
    return row < 8092 ? 'tall' : '';
}

function captionClass(letter) {
    if (letter === 'A') return 'note';
    if (letter === 'J') return 'site-name';
    if (letter === 'M') return 'owner';
    return letter.length > 1 ? 'order' : '';
}

function siteClass(letter, value) {
    if (letter === 'A') return 'id';
    let name = 'field';
    if (textColumns.includes(letter) || value.startsWith('IBC-')) name += ' text';
    if (letter === 'F' || letter === 'J') name += ' low';
    if (letter === 'I') name += ' number';
    if (letter === 'J') name += ' thai';
    return name;
}

function cell(row, letter, index) {
    const site = sites[row - firstRow];
    if (orders[letter] && orders[letter].includes(row)) {
        return `<td class="order-cell ${letter === 'IM' ? 'borderless' : ''}">${names[index]}</td>`;
    }
    if (letter === 'IL' && row === currentRow) {
        return '<td class="selected"><div class="cursor"></div></td>';
    }
    if (site && index < site.length) {
        return `<td class="${siteClass(letter, site[index])}">${site[index]}</td>`;
    }
    return `<td class="${letter === 'M' ? 'frozen' : ''}"></td>`;
}

document.getElementById('columns').innerHTML =
    [23, 33, ...columns.map(c => c[1])].map(width => `<col style="width: ${width}px">`).join('');

const level = '<button class="level" aria-label="Outline"></button>';
document.getElementById('head').innerHTML = `
    <tr class="outline">
        <th class="ruled"></th><th class="ruled">${level}${level}</th>
        <th colspan="10"></th><th class="frozen">${level}</th><th colspan="4"></th>
    </tr>
    <tr class="letters">
        <th class="gutter"><div class="side-by-side">${level}${level}</div></th><th></th>
        ${columns.map(c => `<th class="${c[0] === 'IL' ? 'current' : ''} ${c[0] === 'M' ? 'frozen' : ''}">${c[0]}</th>`).join('')}
    </tr>
    <tr class="names">
        <th class="gutter">${level}</th><th class="row-head">6</th>
        ${columns.map((c, i) => `<th class="caption ${captionClass(c[0])}"><div>${names[i]}</div></th>`).join('')}
    </tr>
    <tr class="filters">
        <th class="gutter"></th><th class="row-head">7</th>
        ${filters.map(f => `<td>${f}<button class="filter" aria-label="Filter"><i class="caret"></i></button></td>`).join('')}
    </tr>`;

let html = '';
for (let row = firstRow; row <= lastRow; row++) {
    html += `<tr class="${rowSize(row)}"><th class="gutter"></th>`;
    html += `<th class="row-head ${row === currentRow ? 'current' : ''}">${row}</th>`;
    html += columns.map((c, i) => cell(row, c[0], i)).join('') + '</tr>';
}
document.getElementById('rows').innerHTML = html;
```
